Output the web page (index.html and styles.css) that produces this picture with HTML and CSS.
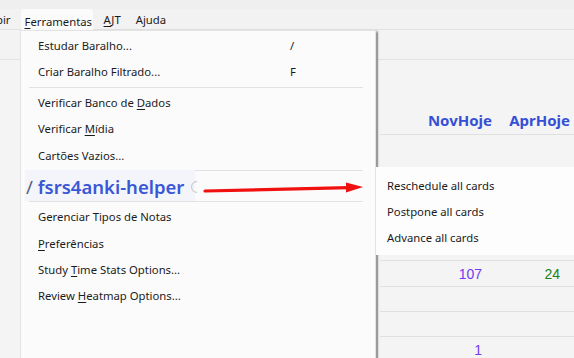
FILE: index.html
```html
<!DOCTYPE html>
<html>
<head>
<meta charset="utf-8">
<link rel="stylesheet" href="styles.css">
</head>
<body>
<div class="app">
  <div class="menubar">
    <span class="mb-item cut">pir</span>
    <span class="mb-item active"><u>F</u>erramentas</span>
    <span class="mb-item"><u>A</u>JT</span>
    <span class="mb-item">Ajuda</span>
  </div>
  <div class="toolbar"></div>
  <div class="main">
    <div class="grid">
      <div class="hrow">
        <span class="h">NovHoje</span>
        <span class="h">AprHoje</span>
      </div>
      <div class="spacer"></div>
      <div class="row"><span class="c new">1</span><span class="c"></span></div>
      <div class="row"><span class="c new">107</span><span class="c rev">24</span></div>
      <div class="row"><span class="c"></span><span class="c"></span></div>
      <div class="row"><span class="c"></span><span class="c"></span></div>
      <div class="row last"><span class="c new">1</span><span class="c"></span></div>
    </div>
  </div>
</div>

<div class="dropdown">
  <div class="item"><span>Estudar Baralho...</span><span class="sc">/</span></div>
  <div class="item"><span>Criar Baralho Filtrado...</span><span class="sc">F</span></div>
  <div class="sep"></div>
  <div class="item"><span>Verificar Banco de <u>D</u>ados</span></div>
  <div class="item"><span>Verificar <u>M</u>ídia</span></div>
  <div class="item"><span>Cartões Vazios...</span></div>
  <div class="sep"></div>
  <div class="item"><span></span></div>
  <div class="sep"></div>
  <div class="item"><span>Gerenciar Tipos de Notas</span></div>
  <div class="item"><span><u>P</u>referências</span></div>
  <div class="item"><span>Study <u>T</u>ime Stats Options...</span></div>
  <div class="item"><span>Review <u>H</u>eatmap Options...</span></div>
</div>

<div class="chip">
  <span class="slash">/</span> fsrs4anki-helper
  <svg class="ring" width="8" height="14" viewBox="0 0 8 14"><path d="M7 1.5 A5.5 5.5 0 0 0 7 12.5" fill="none" stroke="#cfcfcf" stroke-width="1.3"/></svg>
</div>

<svg class="arrow" width="170" height="16" viewBox="0 0 170 16">
  <path d="M2 11 L146 7.6" stroke="#f01010" stroke-width="3.2" stroke-linecap="round" fill="none"/>
  <path d="M143 2.5 L160 7 L143 12.5 Z" fill="#f01010"/>
</svg>

<div class="submenu">
  <div class="sitem">Reschedule all cards</div>
  <div class="sitem">Postpone all cards</div>
  <div class="sitem">Advance all cards</div>
</div>
</body>
</html>
```
FILE: styles.css
```css
html, body {
  margin: 0;
  padding: 0;
}
body {
  width: 574px;
  height: 358px;
  overflow: hidden;
  background: #f4f4f4;
  font-family: "Segoe UI", "Noto Sans", "Liberation Sans", sans-serif;
  font-size: 11.3px;
  color: #1b1b1b;
  position: relative;
}
u {
  text-decoration: underline;
  text-underline-offset: 2px;
}
.app {
  display: flex;
  flex-direction: column;
  height: 358px;
  overflow: hidden;
}
.menubar {
  flex-shrink: 0;
  height: 30px;
  box-sizing: border-box;
  background: linear-gradient(#efefef 0, #efefef 9px, #f2f2f2 9px);
  border-bottom: 1px solid #e2e2e2;
  display: flex;
  align-items: flex-end;
}
.mb-item {
  height: 21px;
  box-sizing: border-box;
  padding: 2px 4px 0;
  line-height: 19px;
  margin-right: 7px;
  border-radius: 4px 4px 0 0;
}
.mb-item.cut {
  margin-left: -8px;
  margin-right: 6px;
}
.mb-item.active {
  background: #fbfbfb;
  height: 21px;
  margin-bottom: -1px;
  padding: 3px 4px 0 4px;
  width: 72px;
}
.toolbar {
  flex-shrink: 0;
  height: 30px;
  box-sizing: border-box;
  background: #f3f3f3;
  border-bottom: 1px solid #e3e3e3;
}
.main {
  flex: 1;
  min-height: 0;
  display: flex;
  justify-content: flex-end;
  padding-top: 45px;
}
.grid {
  width: 194px;
  flex-shrink: 0;
}
.hrow {
  display: grid;
  grid-template-columns: 116px 78px;
  height: 30px;
  border-bottom: 1px solid #e0e0e0;
  box-sizing: border-box;
}
.h {
  text-align: right;
  padding-right: 4px;
  font-weight: 700;
  font-size: 15px;
  color: #3550d6;
  line-height: 30px;
}
.spacer {
  height: 101px;
}
.row {
  display: grid;
  grid-template-columns: 116px 78px;
  height: 24.3px;
  border-bottom: 1px solid #e0e0e0;
}
.row.last {
  border-bottom: none;
}
.c {
  text-align: right;
  padding-right: 14px;
  font-size: 14px;
  line-height: 26px;
  font-family: "Liberation Sans", "Noto Sans", sans-serif;
}
.c.new { color: #7438f0; }
.c.rev { color: #208020; }

.dropdown {
  position: absolute;
  left: 20px;
  top: 30px;
  width: 356px;
  height: 340px;
  box-sizing: border-box;
  background: #fbfbfb;
  border: 1px solid #e4e4e4;
  box-shadow: 2px 0 1px -0.5px #9a9a9a, 3px 0 2px -1px rgba(0,0,0,0.25);
  padding-top: 2px;
}
.item {
  height: 26.3px;
  line-height: 26px;
  display: grid;
  grid-template-columns: 252px 1fr;
  padding-left: 17px;
  white-space: nowrap;
}
.sep {
  height: 1px;
  margin: 1.5px 12px 2px 8px;
  background: #e2e2e2;
}
.chip {
  position: absolute;
  left: 25px;
  top: 170px;
  width: 170px;
  height: 31px;
  box-sizing: border-box;
  background: #f3f5fa;
  padding-left: 1px;
  font-family: "Segoe UI", "Noto Sans", sans-serif;
  font-weight: 600;
  font-size: 18.5px;
  line-height: 33px;
  color: #3a57d5;
  white-space: nowrap;
}
.chip .slash {
  color: #5a6080;
  font-weight: 400;
}
.chip .ring {
  position: absolute;
  right: -3px;
  top: 10px;
}
.arrow {
  position: absolute;
  left: 203px;
  top: 180px;
}
.submenu {
  position: absolute;
  left: 376px;
  top: 167px;
  width: 198px;
  height: 88px;
  box-sizing: border-box;
  background: #fdfdfd;
  padding-top: 6px;
}
.sitem {
  height: 26px;
  line-height: 26px;
  padding-left: 11px;
  white-space: nowrap;
}
```
